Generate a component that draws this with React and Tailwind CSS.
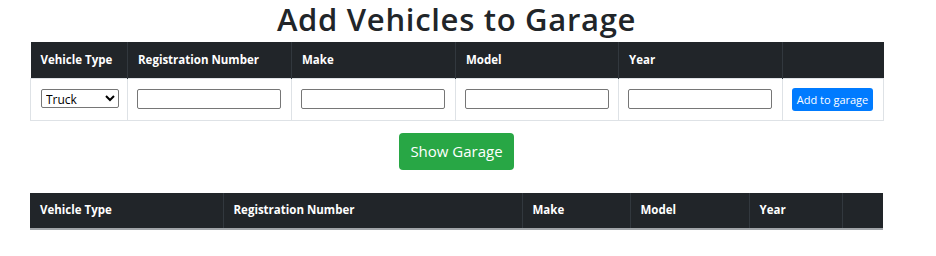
export default function App() {

  const cols = ["Vehicle Type", "Registration Number", "Make", "Model", "Year"];

  return (
    <div className="bg-white min-h-screen text-[#212529]" style={{ fontFamily: '"Open Sans", "Noto Sans", sans-serif' }}>
      <div className="w-[913px]">

        <h1 className="text-center text-[31px] font-semibold leading-[38px] tracking-[0.7px]">
          Add Vehicles to Garage
        </h1>

        <div className="px-[30px] mt-[4px]">
          <table className="w-[853px] border-collapse table-fixed text-[11.5px]">
            <thead>
              <tr className="bg-[#212529] text-white h-[36px]">
                <th className="w-[97px] text-left font-bold pl-[10px] border-r border-[#32383e]">Vehicle Type</th>
                <th className="w-[164px] text-left font-bold pl-[10px] border-r border-[#32383e]">Registration Number</th>
                <th className="w-[164px] text-left font-bold pl-[10px] border-r border-[#32383e]">Make</th>
                <th className="w-[163px] text-left font-bold pl-[10px] border-r border-[#32383e]">Model</th>
                <th className="w-[164px] text-left font-bold pl-[10px] border-r border-[#32383e]">Year</th>
                <th className="w-[101px]"></th>
              </tr>
            </thead>
            <tbody>
              <tr className="h-[42px]">
                <td className="border border-[#dee2e6] pl-[10px]">
                  <select className="w-[78px] h-[19px] border border-[#767676] rounded-[2px] text-[12px] pl-0 text-black bg-white">
                    <option>Truck</option>
                    <option>Car</option>
                    <option>Bike</option>
                  </select>
                </td>
                {[0, 1, 2, 3].map((i) => (
                  <td key={i} className="border border-[#dee2e6] pl-[9px]">
                    <input className="block w-[144px] h-[20px] border border-[#767676] rounded-[2px] bg-white" />
                  </td>
                ))}
                <td className="border border-[#dee2e6] pl-[9px]">
                  <button className="bg-[#007bff] text-white text-[11px] h-[23px] w-[81px] rounded-[3px] leading-none">
                    Add to garage
                  </button>
                </td>
              </tr>
            </tbody>
          </table>
        </div>

        <div className="flex justify-center mt-[12px]">
          <button className="bg-[#28a745] text-white text-[15px] w-[115px] h-[37px] rounded-[4px]">
            Show Garage
          </button>
        </div>

        <div className="px-[30px] mt-[23px]">
          <table className="w-[853px] border-collapse table-fixed text-[11.5px]">
            <thead>
              <tr className="bg-[#212529] text-white h-[36px] border-b-2 border-[#a0a4a8]">
                <th className="w-[193px] text-left font-bold pl-[10px] border-r border-[#32383e]">{cols[0]}</th>
                <th className="w-[299px] text-left font-bold pl-[10px] border-r border-[#32383e]">{cols[1]}</th>
                <th className="w-[108px] text-left font-bold pl-[10px] border-r border-[#32383e]">{cols[2]}</th>
                <th className="w-[119px] text-left font-bold pl-[10px] border-r border-[#32383e]">{cols[3]}</th>
                <th className="w-[93px] text-left font-bold pl-[10px] border-r border-[#32383e]">{cols[4]}</th>
                <th className="w-[41px]"></th>
              </tr>
            </thead>
          </table>
        </div>

      </div>
    </div>
  );
}
